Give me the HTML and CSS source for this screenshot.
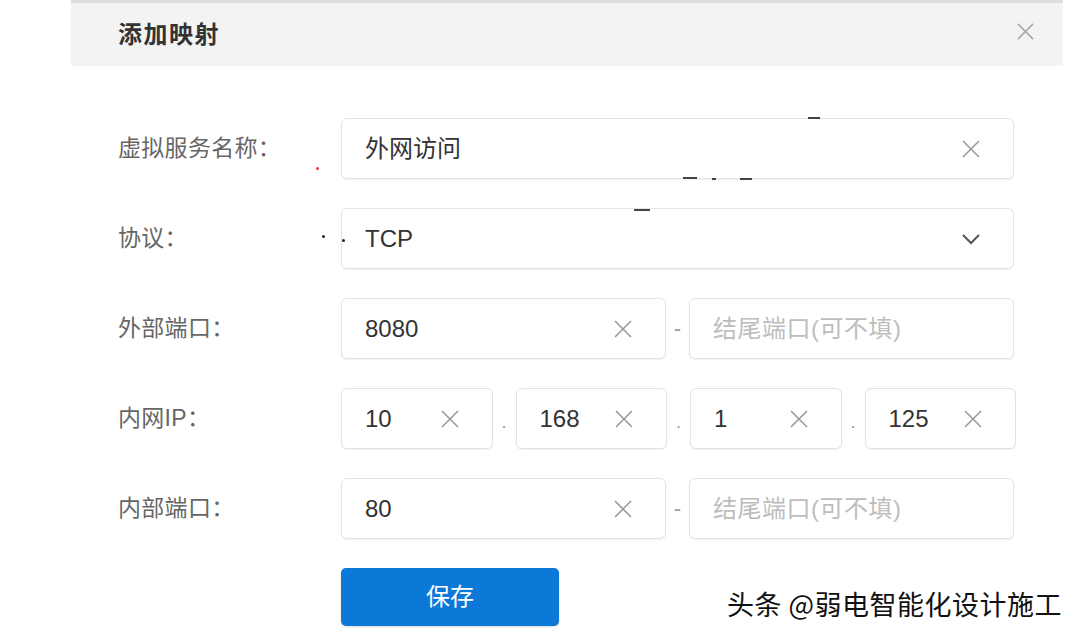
FILE: index.html
```html
<!DOCTYPE html>
<html lang="zh-CN">
<head>
  <meta charset="UTF-8">
  <title>添加映射</title>
  <link rel="stylesheet" href="styles.css">
</head>
<body>
  <div class="dialog">
    <div class="dialog-head">
      <span class="dialog-title">添加映射</span>
      <svg class="dialog-close" viewBox="0 0 20 20"><path d="M2 2 L18 18 M18 2 L2 18"/></svg>
    </div>

    <div class="form">
      <div class="form-label">虚拟服务名称：</div>
      <div class="form-field">
        <div class="input">
          <span class="input-value cjk">外网访问</span>
          <svg class="icon-clear" viewBox="0 0 20 20"><path d="M2 2 L18 18 M18 2 L2 18"/></svg>
        </div>
      </div>

      <div class="form-label">协议：</div>
      <div class="form-field">
        <div class="input">
          <span class="input-value">TCP</span>
          <svg class="icon-arrow" viewBox="0 0 20 12"><path d="M2 2 L10 10 L18 2"/></svg>
        </div>
      </div>

      <div class="form-label">外部端口：</div>
      <div class="form-field">
        <div class="input">
          <span class="input-value">8080</span>
          <svg class="icon-clear" viewBox="0 0 20 20"><path d="M2 2 L18 18 M18 2 L2 18"/></svg>
        </div>
        <span class="sep sep-dash">-</span>
        <div class="input">
          <span class="input-placeholder cjk">结尾端口(可不填)</span>
        </div>
      </div>

      <div class="form-label">内网IP：</div>
      <div class="form-field form-field-ip">
        <div class="input">
          <span class="input-value">10</span>
          <svg class="icon-clear" viewBox="0 0 20 20"><path d="M2 2 L18 18 M18 2 L2 18"/></svg>
        </div>
        <span class="sep sep-dot">.</span>
        <div class="input">
          <span class="input-value">168</span>
          <svg class="icon-clear" viewBox="0 0 20 20"><path d="M2 2 L18 18 M18 2 L2 18"/></svg>
        </div>
        <span class="sep sep-dot">.</span>
        <div class="input">
          <span class="input-value">1</span>
          <svg class="icon-clear" viewBox="0 0 20 20"><path d="M2 2 L18 18 M18 2 L2 18"/></svg>
        </div>
        <span class="sep sep-dot">.</span>
        <div class="input">
          <span class="input-value">125</span>
          <svg class="icon-clear" viewBox="0 0 20 20"><path d="M2 2 L18 18 M18 2 L2 18"/></svg>
        </div>
      </div>

      <div class="form-label">内部端口：</div>
      <div class="form-field">
        <div class="input">
          <span class="input-value">80</span>
          <svg class="icon-clear" viewBox="0 0 20 20"><path d="M2 2 L18 18 M18 2 L2 18"/></svg>
        </div>
        <span class="sep sep-dash">-</span>
        <div class="input">
          <span class="input-placeholder cjk">结尾端口(可不填)</span>
        </div>
      </div>

      <div></div>
      <div class="form-actions">
        <button class="btn-save">保存</button>
      </div>
    </div>
  </div>

  <!-- leftover specks on the screenshot -->
  <span class="speck speck-red"></span>
  <span class="speck speck-a"></span>
  <span class="speck speck-b"></span>
  <span class="smudge smudge-1"></span>
  <span class="smudge smudge-2"></span>
  <span class="smudge smudge-3"></span>
  <span class="smudge smudge-4"></span>
  <span class="smudge smudge-5"></span>

  <div class="watermark">头条 @弱电智能化设计施工</div>
</body>
</html>
```

FILE: styles.css
```css
body {
  margin: 0;
  background: #fff;
  font-family: "Liberation Sans", "Noto Sans CJK SC", sans-serif;
  color: #333;
  position: relative;
  width: 1080px;
  height: 638px;
  overflow: hidden;
}
.dialog {
  width: 1080px;
}
.dialog-head {
  margin-left: 71px;
  width: 992px;
  height: 63px;
  border-top: 3px solid #dedede;
  background: #f3f3f3;
  display: flex;
  align-items: center;
  justify-content: space-between;
  padding-bottom: 0;
}
.dialog-title {
  padding: 0 0 5px 47px;
  font-size: 24px;
  font-weight: bold;
  color: #333;
  letter-spacing: 1.5px;
}
.dialog-close {
  width: 19px;
  height: 19px;
  margin: 0 28px 6px 0;
  fill: none;
  stroke: #a8a8a8;
  stroke-width: 1.6;
}

.form {
  display: grid;
  grid-template-columns: 223px 673px;
  grid-auto-rows: 61px;
  row-gap: 29px;
  padding: 52px 0 0 118px;
}
.form-label {
  display: flex;
  align-items: center;
  padding-bottom: 5px;
  font-size: 23px;
  color: #666;
  letter-spacing: 0.3px;
}
.form-field {
  display: flex;
  align-items: stretch;
}
.form-field-ip {
  width: 675px;
}
.input {
  flex: 1;
  display: flex;
  align-items: center;
  justify-content: space-between;
  padding: 0 32px 0 23px;
  border: 1px solid #e3e3e3;
  border-radius: 6px;
  box-shadow: 0 1px 2px rgba(0, 0, 0, 0.06);
  background: #fff;
}
.input-value {
  font-size: 24px;
  color: #333;
}
.input-placeholder {
  font-size: 24px;
  color: #bdbdbd;
  letter-spacing: 0.5px;
}
.cjk {
  padding-bottom: 5px;
}
.icon-clear {
  width: 20px;
  height: 20px;
  fill: none;
  stroke: #999;
  stroke-width: 1.6;
}
.icon-arrow {
  width: 20px;
  height: 12px;
  fill: none;
  stroke: #555;
  stroke-width: 2;
}
.sep {
  width: 23px;
  flex: none;
  display: flex;
  justify-content: center;
  color: #999;
  font-size: 22px;
}
.sep-dash {
  align-items: center;
}
.sep-dot {
  align-items: flex-end;
  padding-bottom: 16px;
  font-size: 18px;
}
.btn-save {
  width: 218px;
  height: 58px;
  padding-bottom: 6px;
  border: none;
  border-radius: 5px;
  background: #0c79d8;
  color: #fff;
  font-family: inherit;
  font-size: 24px;
  box-shadow: 0 1px 2px rgba(0, 0, 0, 0.15);
}

.speck {
  position: absolute;
  width: 3px;
  height: 3px;
  border-radius: 50%;
}
.speck-red { left: 316px; top: 167px; background: #e8354a; }
.speck-a { left: 322px; top: 235px; background: #222; }
.speck-b { left: 342px; top: 239px; background: #222; }
.smudge {
  position: absolute;
  height: 2px;
  background: #444;
}
.smudge-1 { left: 683px; top: 177px; width: 14px; }
.smudge-2 { left: 712px; top: 178px; width: 4px; }
.smudge-3 { left: 740px; top: 178px; width: 12px; }
.smudge-4 { left: 634px; top: 209px; width: 16px; }
.smudge-5 { left: 808px; top: 117px; width: 12px; }

.watermark {
  position: absolute;
  left: 727px;
  top: 584px;
  font-family: "Noto Sans CJK SC", sans-serif;
  font-size: 27px;
  letter-spacing: 0.5px;
  color: #111;
  text-shadow: 1px 1px 0 #fff, -1px -1px 0 #fff, 1px -1px 0 #fff, -1px 1px 0 #fff;
  white-space: nowrap;
}
```
